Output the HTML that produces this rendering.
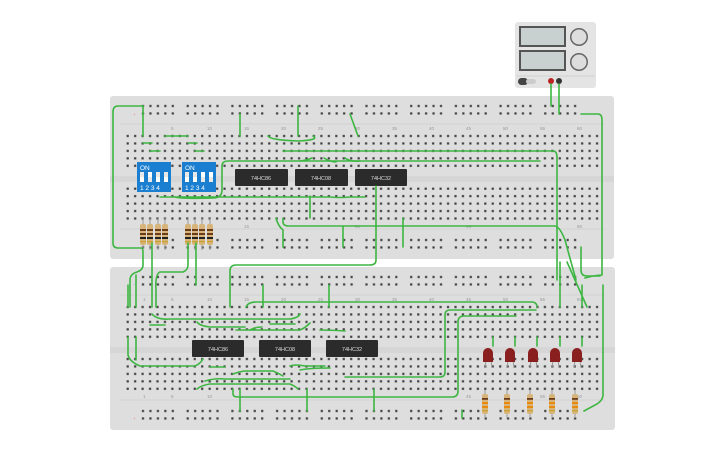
<!DOCTYPE html>
<html><head><meta charset="utf-8"><style>
html,body{margin:0;padding:0;background:#fff;width:725px;height:453px;overflow:hidden}
svg{display:block}
text{font-family:"Liberation Sans",sans-serif}
</style></head><body>
<svg width="725" height="453" viewBox="0 0 725 453" xmlns="http://www.w3.org/2000/svg">
<defs>
<pattern id="g" patternUnits="userSpaceOnUse" x="0" y="0" width="7.45" height="7.45">
<rect x="2.6" y="2.6" width="2.2" height="2.2" fill="#3f3f3f"/></pattern>
<pattern id="r" patternUnits="userSpaceOnUse" x="0" y="0" width="44.7" height="7.45">
<rect x="2.6" y="2.6" width="2.2" height="2.2" fill="#3f3f3f"/><rect x="10.05" y="2.6" width="2.2" height="2.2" fill="#3f3f3f"/><rect x="17.5" y="2.6" width="2.2" height="2.2" fill="#3f3f3f"/><rect x="24.95" y="2.6" width="2.2" height="2.2" fill="#3f3f3f"/><rect x="32.4" y="2.6" width="2.2" height="2.2" fill="#3f3f3f"/></pattern>
<g id="res"><rect x="0" y="0" width="6" height="21" rx="2" fill="#d7b57a"/><rect x="0" y="5" width="6" height="2" fill="#6b3d1a"/><rect x="0" y="9" width="6" height="2" fill="#6b3d1a"/><rect x="0" y="13" width="6" height="2" fill="#222"/><rect x="0" y="17" width="6" height="1.2" fill="#c9a230"/></g>
<g id="res2"><rect x="0" y="0" width="6" height="20" rx="2" fill="#d7b57a"/><rect x="0" y="4" width="6" height="1.8" fill="#6b3d1a"/><rect x="0" y="8" width="6" height="2" fill="#e88a10"/><rect x="0" y="12" width="6" height="2" fill="#e88a10"/><rect x="0" y="16" width="6" height="1.2" fill="#c9a230"/></g>
</defs>
<!-- power supply -->
<rect x="515" y="22" width="81" height="66" rx="3" fill="#e4e4e4"/>
<rect x="519" y="26" width="47" height="21" fill="#555"/><rect x="521" y="28" width="43" height="17" fill="#c9d0d0"/>
<rect x="519" y="50" width="47" height="21" fill="#555"/><rect x="521" y="52" width="43" height="17" fill="#c9d0d0"/>
<circle cx="579" cy="37" r="9" fill="#666"/><circle cx="579" cy="37" r="7.5" fill="#ddd"/>
<circle cx="579" cy="62" r="9" fill="#666"/><circle cx="579" cy="62" r="7.5" fill="#ddd"/>
<line x1="516" y1="76" x2="595" y2="76" stroke="#d0d0d0"/>
<rect x="518" y="78" width="10" height="7" rx="3.5" fill="#444"/><rect x="526" y="79" width="10" height="5" rx="2.5" fill="#ccc"/>
<circle cx="551" cy="81" r="3" fill="#b22"/><circle cx="559" cy="81" r="3" fill="#333"/>
<!-- boards -->
<rect x="110" y="96" width="504" height="163" rx="3" fill="#dedede"/>
<rect x="110" y="267" width="505" height="163" rx="3" fill="#dedede"/>
<g stroke="#d2d2d2" stroke-width="1"><line x1="120" y1="124" x2="605" y2="124"/><line x1="120" y1="229" x2="605" y2="229"/><line x1="120" y1="295" x2="605" y2="295"/><line x1="120" y1="400" x2="605" y2="400"/></g>
<rect x="110" y="176" width="504" height="6" fill="#d6d6d6"/>
<rect x="110" y="347" width="505" height="6" fill="#d6d6d6"/>
<!-- holes -->
<rect transform="translate(124,132.3)" width="475" height="37.3" fill="url(#g)"/>
<rect transform="translate(124,185)" width="475" height="37.3" fill="url(#g)"/>
<rect transform="translate(124,303.3)" width="475" height="37.3" fill="url(#g)"/>
<rect transform="translate(124,355.3)" width="475" height="37.3" fill="url(#g)"/>
<rect transform="translate(139.3,102.3)" width="446" height="14.9" fill="url(#r)"/>
<rect transform="translate(139.3,236.3)" width="446" height="14.9" fill="url(#r)"/>
<rect transform="translate(139.3,273.3)" width="446" height="14.9" fill="url(#r)"/>
<rect transform="translate(139.3,407.3)" width="446" height="14.9" fill="url(#r)"/>
<g font-size="4.5" fill="#999">
<text x="133" y="116" fill="#e88">+</text><text x="133" y="249" fill="#8ad">−</text>
<text x="133" y="286" fill="#8ad">−</text><text x="133" y="420" fill="#e88">+</text>
<text x="171" y="130">5</text><text x="207" y="130">10</text><text x="244" y="130">15</text><text x="281" y="130">20</text><text x="318" y="130">25</text><text x="355" y="130">30</text><text x="392" y="130">35</text><text x="429" y="130">40</text><text x="466" y="130">45</text><text x="503" y="130">50</text><text x="540" y="130">55</text><text x="577" y="130">60</text>
<text x="244" y="228">15</text><text x="355" y="228">30</text><text x="466" y="228">45</text><text x="577" y="228">60</text>
<text x="143" y="301">1</text><text x="171" y="301">5</text><text x="207" y="301">10</text><text x="244" y="301">15</text><text x="281" y="301">20</text><text x="318" y="301">25</text><text x="355" y="301">30</text><text x="392" y="301">35</text><text x="429" y="301">40</text><text x="466" y="301">45</text><text x="503" y="301">50</text><text x="540" y="301">55</text><text x="577" y="301">60</text>
<text x="143" y="398">1</text><text x="171" y="398">5</text><text x="207" y="398">10</text><text x="466" y="398">45</text><text x="540" y="398">55</text><text x="577" y="398">60</text>
</g>
<!-- chips -->
<g font-size="5.5" fill="#ddd" text-anchor="middle">
<rect x="235" y="169" width="53" height="17" rx="1" fill="#2b2b2b"/><text x="261" y="180">74HC86</text>
<rect x="295" y="169" width="53" height="17" rx="1" fill="#2b2b2b"/><text x="321" y="180">74HC08</text>
<rect x="355" y="169" width="52" height="17" rx="1" fill="#2b2b2b"/><text x="381" y="180">74HC32</text>
<rect x="192" y="340" width="52" height="17" rx="1" fill="#2b2b2b"/><text x="218" y="351">74HC86</text>
<rect x="259" y="340" width="52" height="17" rx="1" fill="#2b2b2b"/><text x="285" y="351">74HC08</text>
<rect x="326" y="340" width="52" height="17" rx="1" fill="#2b2b2b"/><text x="352" y="351">74HC32</text>
</g>
<!-- DIP switches -->
<rect x="137" y="162" width="34" height="30" fill="#1a7fd0"/><rect x="182" y="162" width="34" height="30" fill="#1a7fd0"/>
<g fill="#fff" font-size="6.5"><text x="140" y="170">ON</text><text x="185" y="170">ON</text>
<text x="140" y="190">1 2 3 4</text><text x="185" y="190">1 2 3 4</text></g>
<g fill="#e8e8e8"><rect x="140" y="172" width="4" height="10"/><rect x="148" y="172" width="4" height="10"/><rect x="156" y="172" width="4" height="10"/><rect x="164" y="172" width="4" height="10"/>
<rect x="185" y="172" width="4" height="10"/><rect x="193" y="172" width="4" height="10"/><rect x="201" y="172" width="4" height="10"/><rect x="209" y="172" width="4" height="10"/></g>
<g fill="#fff"><rect x="140" y="177" width="4" height="5"/><rect x="148" y="172" width="4" height="5"/><rect x="156" y="177" width="4" height="5"/><rect x="164" y="177" width="4" height="5"/>
<rect x="185" y="177" width="4" height="5"/><rect x="193" y="177" width="4" height="5"/><rect x="201" y="172" width="4" height="5"/><rect x="209" y="172" width="4" height="5"/></g>
<!-- resistors top -->
<g stroke="#999" stroke-width="1"><path d="M143,218V250M150,218V250M158,218V250M165,218V250M188,218V250M195,218V250M202,218V250M210,218V250"/></g>
<use href="#res" x="140" y="224"/><use href="#res" x="147" y="224"/><use href="#res" x="155" y="224"/><use href="#res" x="162" y="224"/>
<use href="#res" x="185" y="224"/><use href="#res" x="192" y="224"/><use href="#res" x="199" y="224"/><use href="#res" x="207" y="224"/>
<!-- LEDs & resistors bottom -->
<g stroke="#999" stroke-width="1"><path d="M486,360l-1,8M491,360l1,8M508,360l-1,8M513,360l1,8M531,360l-1,8M536,360l1,8M553,360l-1,8M558,360l1,8M575,360l-1,8M580,360l1,8"/>
<path d="M485,390V418M507,390V418M530,390V418M552,390V418M575,390V418"/></g>
<g fill="#8a1f1f">
<path d="M483,362v-9a5,5 0 0 1 10,0v9z"/><path d="M505,362v-9a5,5 0 0 1 10,0v9z"/><path d="M528,362v-9a5,5 0 0 1 10,0v9z"/><path d="M550,362v-9a5,5 0 0 1 10,0v9z"/><path d="M572,362v-9a5,5 0 0 1 10,0v9z"/></g>
<use href="#res2" x="482" y="394"/><use href="#res2" x="504" y="394"/><use href="#res2" x="527" y="394"/><use href="#res2" x="549" y="394"/><use href="#res2" x="572" y="394"/>
<!-- wires -->
<g fill="none" stroke="#3db642" stroke-width="1.6" stroke-linecap="round">
<path d="M551,84V106M559,84V114"/>
<path d="M143,106H118Q113,106 113,112V243Q113,248 118,248H141Q143,248 143,252V265Q143,270 137,272Q130,274 130,280V307"/>
<path d="M143,106V136M165,136H188M143,143H152M188,143H197M150,151H160M195,151H204"/>
<path d="M240,114V136M298,106V136M268,136Q270,140 298,141Q320,140 313,136"/>
<path d="M350,114L358,136"/>
<path d="M283,151H553Q557,151 557,157V280"/>
<path d="M175,197Q183,199 213,198Q222,198 222,190V166Q222,161 228,161H540"/>
<path d="M160,197H330Q340,198 350,197H365"/>
<path d="M324,158Q330,162 336,162M345,158Q350,162 360,161M300,161Q308,160 312,158"/>
<path d="M376,186V260Q376,265 370,265H236Q230,265 230,271V307"/>
<path d="M276,218Q278,226 283,230V247M283,218V222Q283,226 289,226H555Q560,227 565,240L576,280"/>
<path d="M343,226V247M403,218V247M310,196V218"/>
<path d="M581,114H598Q602,114 602,120V275Q596,275 585,278"/>
<path d="M581,247V270Q581,276 587,276H600"/>
<path d="M152,243V307M188,243V265Q188,270 183,272H160Q155,274 156,290V307M196,243V285"/>
<path d="M128,285V307M136,275V307M128,337V355Q130,362 140,366H195Q200,364 203,359M136,337V360"/>
<path d="M152,314Q157,320 170,319H290Q298,318 300,314"/>
<path d="M150,325H165M197,322Q200,326 210,327H245M250,330Q255,327 262,327M270,324H295"/>
<path d="M236,330H300Q305,328 310,323M320,330Q330,330 345,331"/>
<path d="M246,307Q248,302 256,302H533Q537,303 537,307"/>
<path d="M263,285V307M329,285V307"/>
<path d="M210,367H225M233,374Q238,372 244,371H273Q278,373 283,376M205,381Q215,378 225,379H290M197,389Q202,385 210,384H290Q295,386 298,389"/>
<path d="M233,389V394Q233,397 238,397H452Q458,397 458,391V322Q458,316 464,316H516"/>
<path d="M345,377H440Q445,377 445,372V315Q445,310 450,310H536"/>
<path d="M290,366Q295,364 305,366H325M300,370Q310,368 330,368"/>
<path d="M240,389V411M307,389V411M374,389V411M462,410V418"/>
<path d="M493,337V346M515,337V346M537,337V346M560,337V346M582,337V346"/>
<path d="M560,262V307M567,262L587,307M582,285V307"/>
<path d="M603,285V395Q603,400 597,404L584,411"/>
</g>
</svg>
</body></html>
